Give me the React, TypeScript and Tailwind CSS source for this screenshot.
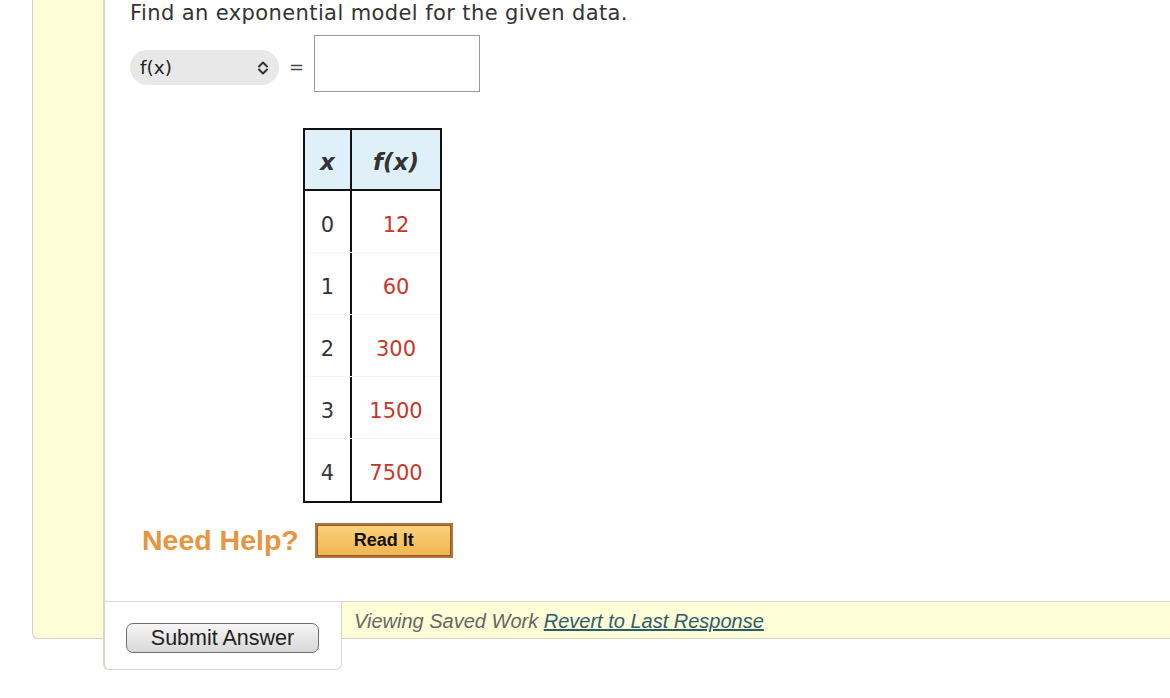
import React from 'react'

// Exponential model question: yellow side rail, data table, help + submit footer.
const ROWS: Array<[string, string]> = [
  ['0', '12'],
  ['1', '60'],
  ['2', '300'],
  ['3', '1500'],
  ['4', '7500']
]

const verdana = { fontFamily: '"DejaVu Sans", Verdana, sans-serif' }
const arial = { fontFamily: '"Liberation Sans", Arial, sans-serif' }

function UpDown(): JSX.Element {
  return (
    <svg width="16" height="16" viewBox="0 0 16 16" fill="none" stroke="#333" strokeWidth="2" strokeLinecap="round" strokeLinejoin="round">
      <path d="M4 6.5 8 2.5l4 4" />
      <path d="M4 9.5l4 4 4-4" />
    </svg>
  )
}

export default function App(): JSX.Element {
  return (
    <div className="w-[1170px] h-[698px] bg-white overflow-hidden">
      <div className="ml-[32px] w-[1160px] h-[639px] bg-[#fffed6] border-l border-b border-[#d2d2c2] rounded-bl-[6px] flex flex-col">
        <div className="ml-[70px] h-[602px] bg-white border-l-2 border-b border-[#d6d6cc] pl-[25px]" style={verdana}>
          <div className="text-[21px] leading-[26px] tracking-[0.4px] text-[#333]">Find an exponential model for the given data.</div>

          <div className="mt-[9px] flex items-center">
            <div className="mt-[8px] w-[149px] h-[35px] rounded-full bg-[#e8e8e8] flex items-center justify-between pl-[10px] pr-[8px] text-[18.5px] text-[#222]">
              <span>f(x)</span>
              <UpDown />
            </div>
            <span className="ml-[10px] mt-[6px] text-[18px] text-[#444]">=</span>
            <div className="ml-[10px] w-[166px] h-[57px] border border-[#999] bg-white" />
          </div>

          <div className="ml-[173px] mt-[36px] w-[139px] border-2 border-[#111]">
            <div className="flex h-[61px] bg-[#dff0f8] border-b-2 border-[#111]">
              <div className="w-[47px] border-r-2 border-[#111] flex items-center justify-center pt-[6px] text-[23px] font-bold italic text-[#333]">x</div>
              <div className="flex-1 flex items-center justify-center pt-[6px] text-[23px] font-bold italic text-[#333]">f(x)</div>
            </div>
            {ROWS.map(([x, y], i) => (
              <div key={x} className={`flex h-[62px] ${i < ROWS.length - 1 ? 'border-b border-[#f4f4f4]' : ''}`}>
                <div className="w-[47px] border-r-2 border-[#111] flex items-center justify-center pt-[8px] text-[21px] text-[#333]">{x}</div>
                <div className="flex-1 flex items-center justify-center pt-[8px] text-[21px] text-[#c9372c]">{y}</div>
              </div>
            ))}
          </div>

          <div className="mt-[16px] ml-[12px] flex items-center" style={arial}>
            <span className="text-[28.5px] font-bold text-[#e69540]">Need Help?</span>
            <div className="ml-[16px] w-[138px] h-[35px] bg-[#b8753a] p-[2px]">
              <div className="w-full h-full border border-[#8a5a2c] bg-gradient-to-b from-[#fbd27a] to-[#f2b552] flex items-center justify-center text-[18px] font-bold text-[#111]">
                Read It
              </div>
            </div>
          </div>
        </div>

        <div className="flex h-[36px]">
          <div className="relative z-10 ml-[70px] w-[239px] h-[68px] bg-white border-l-2 border-r border-b border-[#d6d6cc] rounded-b-[6px] pl-[21px] pt-[21px]" style={arial}>
            <div className="w-[193px] h-[30px] rounded-[7px] border border-[#6e6e6e] bg-gradient-to-b from-[#f6f6f6] to-[#d8d8d8] flex items-center justify-center text-[21.5px] text-[#222]">
              Submit Answer
            </div>
          </div>
          <div className="pl-[12px] pt-[4px] text-[20px] italic text-[#666]" style={arial}>
            Viewing Saved Work{' '}
            <span className="text-[#2c5d6b] underline">Revert to Last Response</span>
          </div>
        </div>
      </div>
    </div>
  )
}
